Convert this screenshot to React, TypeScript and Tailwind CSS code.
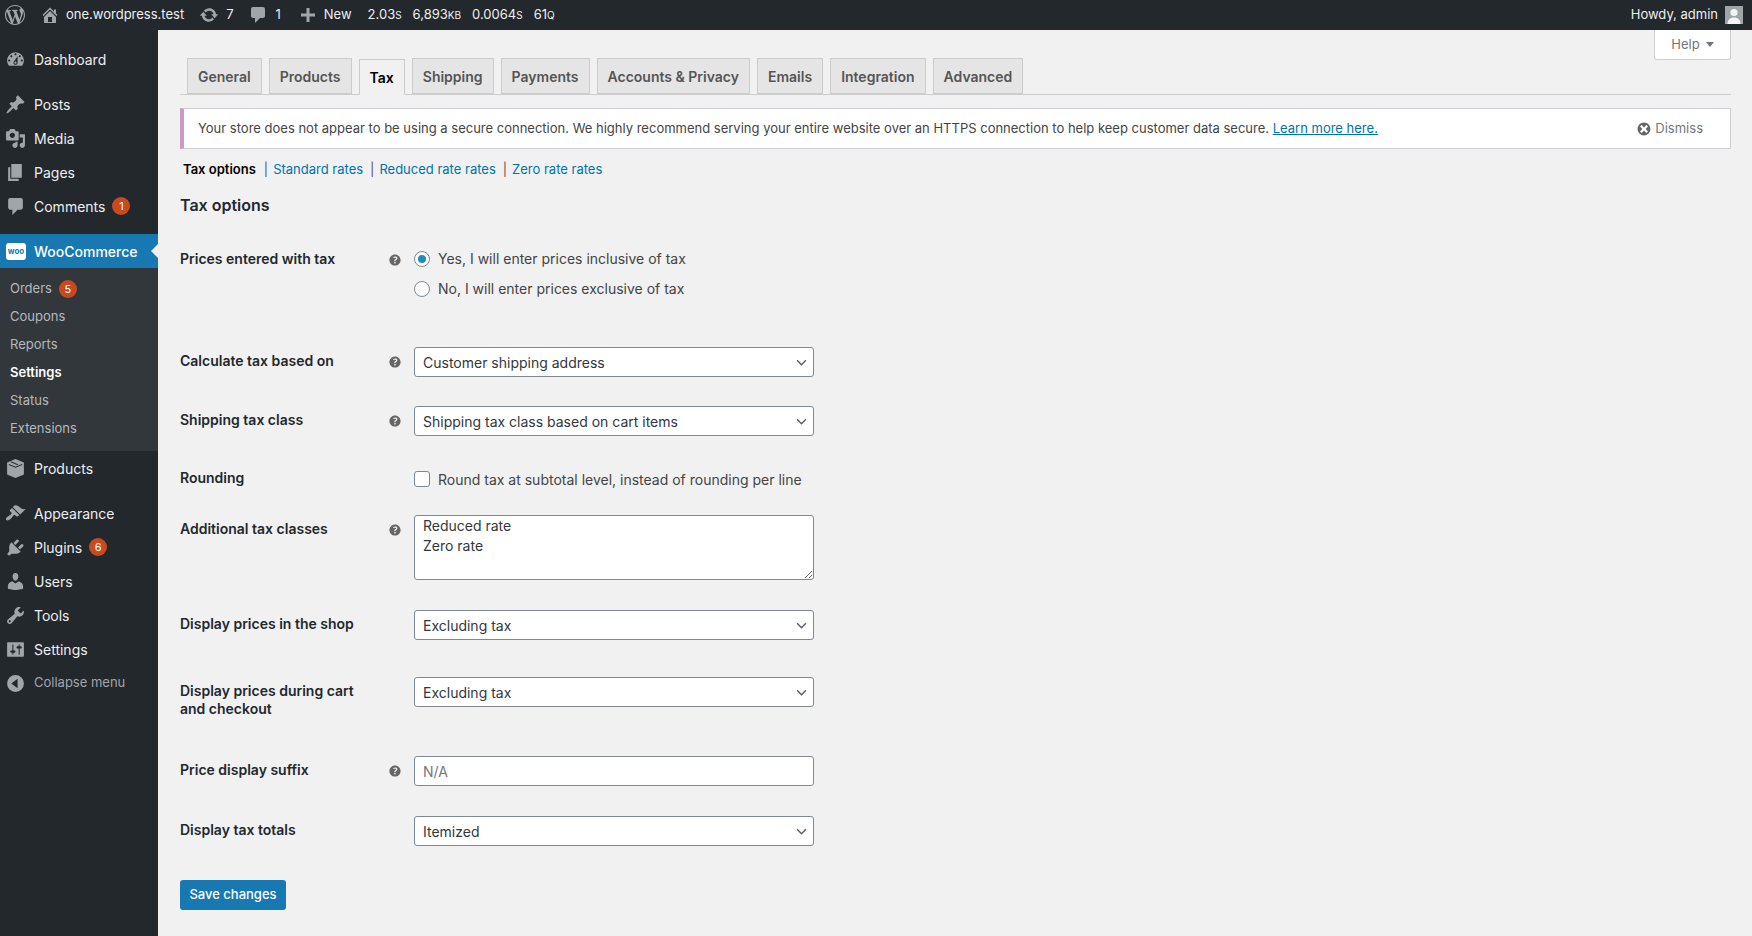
import React from "react";

const P = {
  wp: "M20 10c0-5.51-4.49-10-10-10C4.48 0 0 4.49 0 10c0 5.52 4.48 10 10 10 5.51 0 10-4.48 10-10zM7.78 15.37L4.37 6.22c.55-.02 1.17-.08 1.17-.08.5-.06.44-1.13-.06-1.11 0 0-1.45.11-2.37.11-.18 0-.37 0-.58-.01C4.12 2.69 6.87 1.11 10 1.11c2.33 0 4.45.87 6.05 2.34-.68-.11-1.65.39-1.65 1.58 0 .74.45 1.36.9 2.1.35.61.55 1.36.55 2.46 0 1.49-1.4 5-1.4 5l-3.03-8.37c.54-.02.82-.17.82-.17.5-.05.44-1.25-.06-1.22 0 0-1.44.12-2.38.12-.87 0-2.33-.12-2.33-.12-.5-.03-.56 1.2-.06 1.22l.92.08 1.26 3.41zM17.41 10c.24-.64.74-1.87.43-4.25.7 1.29 1.05 2.71 1.05 4.25 0 3.29-1.73 6.24-4.4 7.78.97-2.59 1.94-5.2 2.92-7.78zM6.1 18.09C3.12 16.65 1.11 13.53 1.11 10c0-1.3.23-2.48.72-3.59C3.25 10.3 4.67 14.2 6.1 18.09zm4.03-6.63l2.58 6.98c-.86.29-1.76.45-2.71.45-.79 0-1.57-.11-2.29-.33.81-2.38 1.62-4.74 2.42-7.1z",
  home: "M16 8.5l1.53 1.53-1.06 1.06L10 4.62l-6.47 6.47-1.06-1.06L10 2.5l4 4v-2h2v4zm-6-2.46l6 5.99V18H4v-5.97zM12 17v-5H8v5h4z",
  update: "M10.2 3.28c3.53 0 6.43 2.61 6.92 6h2.08l-3.5 4-3.5-4h2.32c-.45-1.97-2.21-3.45-4.32-3.45-1.45 0-2.73.71-3.54 1.78L4.95 5.66C6.23 4.2 8.11 3.28 10.2 3.28zm-.4 13.44c-3.52 0-6.43-2.61-6.92-6H.8l3.5-4c1.17 1.33 2.33 2.67 3.5 4H5.48c.45 1.97 2.21 3.45 4.32 3.45 1.45 0 2.73-.71 3.54-1.78l1.71 1.95c-1.28 1.46-3.15 2.38-5.25 2.38z",
  comment: "M5 2h10c1.1 0 2 .9 2 2v7c0 1.1-.9 2-2 2h-3l-5 5v-5H5c-1.1 0-2-.9-2-2V4c0-1.1.9-2 2-2z",
  plus: "M17 8.5v3h-5.5V17h-3v-5.5H3v-3h5.5V3h3v5.5H17z",
  dashboard: "M3.76 16h12.48c1.1-1.37 1.76-3.11 1.76-5 0-4.42-3.58-8-8-8s-8 3.58-8 8c0 1.89.66 3.63 1.76 5zM10 4c.55 0 1 .45 1 1s-.45 1-1 1-1-.45-1-1 .45-1 1-1zM6 6c.55 0 1 .45 1 1s-.45 1-1 1-1-.45-1-1 .45-1 1-1zm8 0c.55 0 1 .45 1 1s-.45 1-1 1-1-.45-1-1 .45-1 1-1zm-5.37 5.55L12 7v6c0 1.1-.9 2-2 2s-2-.9-2-2c0-.57.24-1.08.63-1.45zM4 10c.55 0 1 .45 1 1s-.45 1-1 1-1-.45-1-1 .45-1 1-1zm12 0c.55 0 1 .45 1 1s-.45 1-1 1-1-.45-1-1 .45-1 1-1zm-5 3c0-.55-.45-1-1-1s-1 .45-1 1 .45 1 1 1 1-.45 1-1z",
  post: "M10.44 3.02l1.82-1.82 6.36 6.35-1.83 1.82c-1.05-.68-2.48-.57-3.41.36l-.75.75c-.92.93-1.04 2.35-.35 3.41l-1.83 1.82-2.41-2.41-2.8 2.79c-.42.42-3.38 2.71-3.8 2.29s1.86-3.39 2.28-3.81l2.79-2.79L4.1 9.36l1.83-1.82c1.05.69 2.48.57 3.4-.36l.75-.75c.93-.92 1.05-2.35.36-3.41z",
  media: "M13 11V4c0-.55-.45-1-1-1h-1.67L9 1H5L3.67 3H2c-.55 0-1 .45-1 1v7c0 .55.45 1 1 1h10c.55 0 1-.45 1-1zM7 4.5c1.38 0 2.5 1.12 2.5 2.5S8.38 9.5 7 9.5 4.5 8.38 4.5 7 5.62 4.5 7 4.5zM14 6h5v10.5c0 1.38-1.12 2.5-2.5 2.5S14 17.88 14 16.5s1.12-2.5 2.5-2.5c.17 0 .34.02.5.05V9h-3V6zm-4 8.05V13h2v3.5c0 1.38-1.12 2.5-2.5 2.5S7 17.88 7 16.5 8.12 14 9.5 14c.17 0 .34.02.5.05z",
  page: "M6 15V2h10v13H6zm-1 1h8v2H3V5h2v11z",
  appearance: "M14.48 11.06L7.41 3.99l1.5-1.5c.5-.56 2.3-.47 3.51.32 1.21.8 1.43 1.28 2.91 2.1 1.18.64 2.45 1.26 4.45.85zm-.71.71L6.7 4.7 4.93 6.47c-.39.39-.39 1.02 0 1.41l1.06 1.06c.39.39.39 1.03 0 1.42-.6.6-1.43 1.11-2.21 1.69-.35.26-.7.53-1.01.84C1.43 13.23.4 15.46 1.3 16.3c.9.89 3.11-.14 4.44-1.46.3-.3.58-.65.83-1.01.58-.78 1.09-1.61 1.69-2.21.39-.39 1.03-.39 1.42 0l1.06 1.06c.39.39 1.02.39 1.41 0z",
  plugins: "M13.11 4.36L9.87 7.6 8 5.73l3.24-3.24c.35-.34 1.05-.2 1.56.32.52.51.66 1.21.31 1.55zm-8 1.77l.91-1.12 9.01 9.01-1.19.84c-.71.71-2.63 1.16-3.82 1.16H6.14L4.9 17.26c-.59.59-1.54.59-2.12 0-.59-.58-.59-1.53 0-2.12l1.24-1.24v-3.88c0-1.13.4-3.19 1.09-3.89zm7.26 3.97l3.24-3.24c.34-.35 1.04-.21 1.55.31.52.51.66 1.21.31 1.55l-3.24 3.25z",
  users: "M10 9.25c-2.27 0-2.73-3.44-2.73-3.44C7 4.02 7.82 2 9.97 2c2.16 0 2.98 2.02 2.71 3.81 0 0-.41 3.44-2.68 3.44zm0 2.57L12.72 10c2.39 0 4.52 2.33 4.52 4.53v2.49s-3.65 1.13-7.24 1.13c-3.65 0-7.24-1.13-7.24-1.13v-2.49c0-2.25 1.94-4.48 4.47-4.48z",
  tools: "M16.68 9.77c-1.34 1.34-3.3 1.67-4.95.99l-5.41 6.52c-.99.99-2.59.99-3.58 0s-.99-2.59 0-3.57l6.52-5.42c-.68-1.65-.35-3.61.99-4.95 1.28-1.28 3.12-1.62 4.72-1.06l-2.89 2.89 2.82 2.82 2.86-2.87c.53 1.58.18 3.39-1.08 4.65zM3.81 16.21c.4.39 1.04.39 1.43 0 .4-.4.4-1.04 0-1.43-.39-.4-1.03-.4-1.43 0-.39.39-.39 1.03 0 1.43z",
  settings: "M18 16V4c0-.55-.45-1-1-1H3c-.55 0-1 .45-1 1v12c0 .55.45 1 1 1h14c.55 0 1-.45 1-1zM8 11h1c.55 0 1 .45 1 1s-.45 1-1 1H8v1.5c0 .28-.22.5-.5.5s-.5-.22-.5-.5V13H6c-.55 0-1-.45-1-1s.45-1 1-1h1V5.5c0-.28.22-.5.5-.5s.5.22.5.5V11zm5-2h-1c-.55 0-1-.45-1-1s.45-1 1-1h1V5.5c0-.28.22-.5.5-.5s.5.22.5.5V7h1c.55 0 1 .45 1 1s-.45 1-1 1h-1v5.5c0 .28-.22.5-.5.5s-.5-.22-.5-.5V9z",
  collapse: "M10 2a8 8 0 1 0 0 16 8 8 0 0 0 0-16zm2 3.5v9L6 10z",
  products: "M10 1l8 3.2v11.4L10 19l-8-3.4V4.2L10 1zm0 8.3l6.4-2.7v-1l-6.4 2.7L3.6 5.6v1L10 9.3zM6.2 3.4L5 3.9l6.6 2.8 1.2-.5L6.2 3.4z",
  help: "M17 10c0-3.87-3.14-7-7-7-3.87 0-7 3.13-7 7s3.13 7 7 7c3.86 0 7-3.13 7-7zm-6.3 1.48H9.14v-.43c0-.38.08-.7.24-.98s.46-.57.88-.89c.41-.29.68-.53.81-.71.14-.18.2-.39.2-.62 0-.25-.09-.44-.28-.58-.19-.13-.45-.19-.79-.19-.58 0-1.25.19-2 .57l-.64-1.28c.87-.49 1.8-.74 2.77-.74.81 0 1.45.2 1.92.58.48.39.71.91.71 1.55 0 .43-.09.8-.29 1.11-.19.32-.57.67-1.11 1.06-.38.28-.61.49-.71.63-.1.15-.15.34-.15.57v.35zm-1.47 2.74c-.18-.17-.27-.42-.27-.73 0-.33.08-.58.26-.75s.43-.25.77-.25c.32 0 .57.09.75.26s.27.42.27.74c0 .3-.09.55-.27.72-.18.18-.43.27-.75.27-.33 0-.58-.09-.76-.26z",
  dismiss: "M10 2c4.42 0 8 3.58 8 8s-3.58 8-8 8-8-3.58-8-8 3.58-8 8-8zm5 11l-3-3 3-3-2-2-3 3-3-3-2 2 3 3-3 3 2 2 3-3 3 3z",
};

function Ic({ d, className }: { d: string; className: string }) {
  return (
    <svg viewBox="0 0 20 20" fill="currentColor" fillRule="evenodd" className={className}>
      <path d={d} />
    </svg>
  );
}

function Badge({ n }: { n: string }) {
  return (
    <span className="ml-[7px] flex h-[18px] w-[18px] items-center justify-center rounded-full bg-[#ca4a1f] text-[11px] leading-none text-white">
      {n}
    </span>
  );
}

function MenuItem({ icon, label, badge, extra }: { icon: string; label: string; badge?: string; extra?: string }) {
  return (
    <div className={`flex h-[34px] items-center text-[14px] text-[#eeeeee] ${extra ?? ""}`}>
      <Ic d={icon} className="ml-[5px] mr-[8px] h-[21px] w-[21px] shrink-0 text-[#a0a5aa]" />
      <span>{label}</span>
      {badge && <Badge n={badge} />}
    </div>
  );
}

function SubItem({ label, badge, active }: { label: string; badge?: string; active?: boolean }) {
  return (
    <div className={`flex h-[28px] items-center pl-[10px] text-[13px] ${active ? "font-semibold text-white" : "text-[#b4b9be]"}`}>
      <span>{label}</span>
      {badge && <Badge n={badge} />}
    </div>
  );
}

function Sidebar() {
  return (
    <aside className="w-[158px] shrink-0 bg-[#23282d] pt-[12px]">
      <MenuItem icon={P.dashboard} label="Dashboard" />
      <MenuItem icon={P.post} label="Posts" extra="mt-[11px]" />
      <MenuItem icon={P.media} label="Media" />
      <MenuItem icon={P.page} label="Pages" />
      <MenuItem icon={P.comment} label="Comments" badge="1" />
      <div className="relative mt-[11px] flex h-[34px] items-center bg-[#1878b2] text-[14px] font-medium text-white">
        <span className="ml-[6px] mr-[8px] flex h-[17px] w-[20px] shrink-0 items-center justify-center rounded-[3px] bg-white text-[8px] font-bold leading-none text-[#1878b2]">
          woo
        </span>
        <span>WooCommerce</span>
        <span className="absolute right-0 top-[10px] h-0 w-0 border-y-[7px] border-r-[7px] border-y-transparent border-r-[#f1f1f1]" />
      </div>
      <div className="bg-[#32373c] pb-[8px] pt-[7px]">
        <SubItem label="Orders" badge="5" />
        <SubItem label="Coupons" />
        <SubItem label="Reports" />
        <SubItem label="Settings" active />
        <SubItem label="Status" />
        <SubItem label="Extensions" />
      </div>
      <MenuItem icon={P.products} label="Products" />
      <MenuItem icon={P.appearance} label="Appearance" extra="mt-[11px]" />
      <MenuItem icon={P.plugins} label="Plugins" badge="6" />
      <MenuItem icon={P.users} label="Users" />
      <MenuItem icon={P.tools} label="Tools" />
      <MenuItem icon={P.settings} label="Settings" />
      <div className="flex h-[34px] items-center text-[13px] text-[#a0a5aa]">
        <Ic d={P.collapse} className="ml-[5px] mr-[8px] h-[21px] w-[21px] shrink-0" />
        <span>Collapse menu</span>
      </div>
    </aside>
  );
}

function TopBar() {
  const unit = "text-[10px]";
  return (
    <header className="flex h-[30px] shrink-0 items-center bg-[#23282d] text-[13px] text-[#eeeeee]">
      <Ic d={P.wp} className="ml-[5px] h-[20px] w-[20px] text-[#a0a5aa]" />
      <Ic d={P.home} className="ml-[15px] h-[20px] w-[20px] text-[#a0a5aa]" />
      <span className="ml-[6px]">one.wordpress.test</span>
      <Ic d={P.update} className="ml-[15px] h-[20px] w-[20px] text-[#a0a5aa]" />
      <span className="ml-[7px]">7</span>
      <Ic d={P.comment} className="ml-[14px] h-[20px] w-[20px] text-[#a0a5aa]" />
      <span className="ml-[8px]">1</span>
      <Ic d={P.plus} className="ml-[17px] h-[20px] w-[20px] text-[#a0a5aa]" />
      <span className="ml-[6px]">New</span>
      <span className="ml-[16px]">2.03<span className={unit}>S</span></span>
      <span className="ml-[11px]">6,893<span className={unit}>KB</span></span>
      <span className="ml-[11px]">0.0064<span className={unit}>S</span></span>
      <span className="ml-[11px]">61<span className={unit}>Q</span></span>
      <span className="ml-auto">Howdy, admin</span>
      <span className="ml-[7px] mr-[9px] flex h-[18px] w-[18px] items-end justify-center overflow-hidden bg-[#a0a5aa]">
        <svg viewBox="0 0 18 18" className="h-[18px] w-[18px]" fill="#f4f4f4">
          <circle cx="9" cy="6.5" r="3.6" />
          <path d="M2.5 18c0-4.5 3-6.5 6.5-6.5s6.5 2 6.5 6.5z" />
        </svg>
      </span>
    </header>
  );
}

function Tab({ label, active }: { label: string; active?: boolean }) {
  return (
    <div
      className={`mr-[7px] flex h-[36px] items-center border border-[#cccccc] px-[10px] text-[14px] font-semibold ${
        active ? "-mb-px border-b-[#f1f1f1] bg-[#f1f1f1] text-[#000000]" : "bg-[#e5e5e5] text-[#555555]"
      }`}
    >
      {label}
    </div>
  );
}

function Help() {
  return (
    <span className="flex w-[26px] shrink-0 justify-start pt-[7px]">
      <Ic d={P.help} className="-ml-[1px] h-[16px] w-[16px] text-[#666666]" />
    </span>
  );
}

function Row({ top, label, help, children }: { top: string; label: React.ReactNode; help?: boolean; children: React.ReactNode }) {
  return (
    <div className={`flex items-start ${top}`}>
      <div className="w-[208px] shrink-0 pr-[20px] pt-[5px] text-[14px] font-semibold leading-[18px] text-[#23282d]">{label}</div>
      {help ? <Help /> : <span className="w-[26px] shrink-0" />}
      <div className="w-[400px] shrink-0">{children}</div>
    </div>
  );
}

function Select({ value }: { value: string }) {
  return (
    <div className="relative h-[30px] w-[400px]">
      <select
        defaultValue={value}
        className="h-[30px] w-[400px] appearance-none rounded-[3px] border border-[#7e8993] bg-white pl-[8px] pr-[24px] text-[14px] text-[#32373c] outline-none"
      >
        <option>{value}</option>
      </select>
      <svg viewBox="0 0 12 8" fill="none" stroke="#555d66" strokeWidth="1.6" className="pointer-events-none absolute right-[7px] top-[12px] h-[7px] w-[11px]">
        <path d="M1 1.5l5 5 5-5" />
      </svg>
    </div>
  );
}

function Main() {
  return (
    <main className="relative flex-1 bg-[#f1f1f1] pl-[22px] pr-[21px] pt-[29px]">
      <div className="absolute right-[21px] top-0 flex h-[30px] w-[77px] items-center justify-center gap-[6px] rounded-b-[3px] border border-t-0 border-[#ccd0d4] bg-white text-[13px] text-[#72777c]">
        Help
        <span className="h-0 w-0 border-x-[4px] border-t-[5px] border-x-transparent border-t-[#72777c]" />
      </div>

      <div className="flex h-[36px] items-end border-b border-[#cccccc] pl-[7px]">
        <Tab label="General" />
        <Tab label="Products" />
        <Tab label="Tax" active />
        <Tab label="Shipping" />
        <Tab label="Payments" />
        <Tab label="Accounts &amp; Privacy" />
        <Tab label="Emails" />
        <Tab label="Integration" />
        <Tab label="Advanced" />
      </div>

      <div className="mt-[13px] flex h-[41px] items-center border border-l-4 border-[#ccd0d4] border-l-[#cc99c2] bg-white pl-[14px] pr-[27px] text-[13px] text-[#444444]">
        <span>
          Your store does not appear to be using a secure connection. We highly recommend serving your entire website over an HTTPS connection to help keep customer data secure.{" "}
          <a href="#" className="text-[#0073aa] underline">Learn more here.</a>
        </span>
        <span className="ml-auto flex items-center gap-[3px] text-[#72777c]">
          <Ic d={P.dismiss} className="h-[16px] w-[16px] text-[#666666]" />
          Dismiss
        </span>
      </div>

      <div className="mt-[11px] flex h-[18px] items-center pl-[3px] text-[13px] leading-[18px] text-[#555555]">
        <span className="font-semibold text-[#000000]">Tax options</span>
        <span className="ml-[8px] mr-[5px]">|</span>
        <a href="#" className="text-[#0073aa]">Standard rates</a>
        <span className="ml-[7px] mr-[5px]">|</span>
        <a href="#" className="text-[#0073aa]">Reduced rate rates</a>
        <span className="ml-[7px] mr-[5px]">|</span>
        <a href="#" className="text-[#0073aa]">Zero rate rates</a>
      </div>

      <h2 className="mt-[15px] text-[16px] font-semibold leading-[24px] text-[#23282d]">Tax options</h2>

      <Row top="mt-[28px]" label="Prices entered with tax" help>
        <div className="flex h-[36px] items-start gap-[8px] pt-[6px] text-[14px] text-[#444444]">
          <span className="flex h-[16px] w-[16px] items-center justify-center rounded-full border border-[#7e8993] bg-white">
            <span className="h-[8px] w-[8px] rounded-full bg-[#1e8cbe]" />
          </span>
          <span className="-mt-[1px] leading-[18px]">Yes, I will enter prices inclusive of tax</span>
        </div>
        <div className="flex h-[30px] items-start gap-[8px] text-[14px] text-[#444444]">
          <span className="h-[16px] w-[16px] rounded-full border border-[#7e8993] bg-white" />
          <span className="-mt-[1px] leading-[18px]">No, I will enter prices exclusive of tax</span>
        </div>
      </Row>

      <Row top="mt-[36px]" label="Calculate tax based on" help>
        <Select value="Customer shipping address" />
      </Row>
      <Row top="mt-[29px]" label="Shipping tax class" help>
        <Select value="Shipping tax class based on cart items" />
      </Row>
      <Row top="mt-[28px]" label={<span className="-mt-[0px] block">Rounding</span>}>
        <div className="flex h-[30px] items-center gap-[8px] text-[14px] text-[#444444]">
          <span className="h-[16px] w-[16px] rounded-[3px] border border-[#7e8993] bg-white" />
          <span>Round tax at subtotal level, instead of rounding per line</span>
        </div>
      </Row>
      <Row top="mt-[21px]" label="Additional tax classes" help>
        <textarea
          defaultValue={"Reduced rate\nZero rate"}
          className="block h-[65px] w-[400px] rounded-[3px] border border-[#7e8993] bg-white px-[8px] py-0 text-[14px] leading-[20px] text-[#32373c] outline-none"
        />
      </Row>
      <Row top="mt-[30px]" label="Display prices in the shop">
        <Select value="Excluding tax" />
      </Row>
      <Row top="mt-[37px]" label="Display prices during cart and checkout">
        <Select value="Excluding tax" />
      </Row>
      <Row top="mt-[38px]" label="Price display suffix" help>
        <input
          placeholder="N/A"
          className="block h-[30px] w-[400px] rounded-[3px] border border-[#7e8993] bg-white px-[8px] text-[14px] text-[#32373c] outline-none placeholder:text-[#72777c]"
        />
      </Row>
      <Row top="mt-[30px]" label="Display tax totals">
        <Select value="Itemized" />
      </Row>

      <button className="mt-[34px] block h-[30px] w-[106px] rounded-[3px] bg-[#1878b2] text-[13px] font-medium text-white">
        Save changes
      </button>
    </main>
  );
}

export default function App() {
  return (
    <div className="flex h-[936px] w-[1752px] flex-col overflow-hidden font-['Inter','Liberation_Sans',sans-serif]">
      <TopBar />
      <div className="flex min-h-0 flex-1">
        <Sidebar />
        <Main />
      </div>
    </div>
  );
}
